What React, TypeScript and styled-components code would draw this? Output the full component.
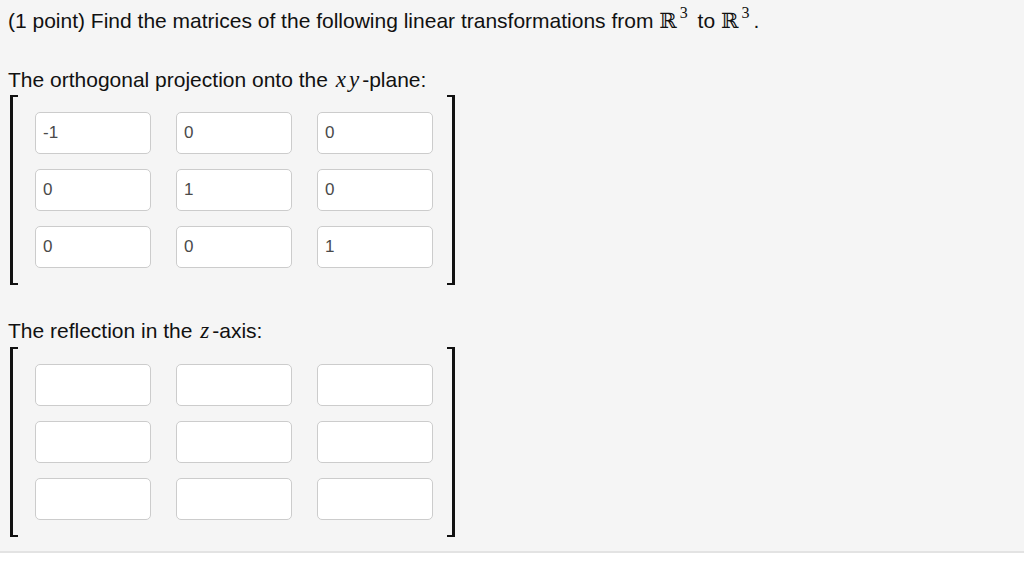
import React from "react";
import styled, { createGlobalStyle } from "styled-components";

const Global = createGlobalStyle`
  html, body { margin: 0; padding: 0; background: #ffffff; }
  body { font-family: "Liberation Sans", Arial, sans-serif; }
`;

const Page = styled.div`
  background: #f5f5f5;
  padding: 9px 0 0 8px;
  height: 553px;
  border-bottom: 2px solid #e3e3e3;
  box-sizing: border-box;
  width: 1024px;
`;

const Line = styled.div<{ $top?: number }>`
  font-size: 21px;
  line-height: 24px;
  color: #111;
  margin-top: ${(p) => p.$top ?? 0}px;
  white-space: nowrap;
`;

const MathVar = styled.span`
  font-family: "Liberation Serif", "Times New Roman", serif;
  font-style: italic;
  font-size: 23px;
  letter-spacing: 3px;
  margin-left: 2px;
`;

const Reals = styled.span`
  font-family: "DejaVu Serif", "DejaVu Sans", serif;
  font-size: 21px;
`;

const Sup = styled.sup`
  font-family: "Liberation Serif", "Times New Roman", serif;
  font-size: 16px;
  vertical-align: 10px;
  line-height: 0;
  margin: 0 4px 0 3px;
`;

const Matrix = styled.div<{ $top: number }>`
  display: flex;
  align-items: stretch;
  margin-top: ${(p) => p.$top}px;
  margin-left: 2px;
  height: 190px;
`;

const Bracket = styled.span<{ $side: "left" | "right" }>`
  width: 8px;
  border-top: 2px solid #111;
  border-bottom: 2px solid #111;
  ${(p) => (p.$side === "left" ? "border-left: 3px solid #111;" : "border-right: 3px solid #111;")}
  box-sizing: border-box;
`;

const Grid = styled.div`
  display: grid;
  grid-template-columns: repeat(3, 116px);
  grid-auto-rows: 42px;
  column-gap: 25px;
  row-gap: 15px;
  align-content: start;
  padding-top: 17px;
  margin: 0 14px 0 17px;
`;

const Cell = styled.input`
  box-sizing: border-box;
  width: 116px;
  height: 42px;
  margin: 0;
  background: #ffffff;
  border: 1px solid #cccccc;
  border-radius: 5px;
  padding: 0 7px;
  font-family: "Liberation Sans", Arial, sans-serif;
  font-size: 17px;
  color: #4a4a4a;
  outline: none;
`;

const projection = [
  ["-1", "0", "0"],
  ["0", "1", "0"],
  ["0", "0", "1"],
];
const empty = [
  ["", "", ""],
  ["", "", ""],
  ["", "", ""],
];

function MatrixInput({ values, top }: { values: string[][]; top: number }) {
  return (
    <Matrix $top={top}>
      <Bracket $side="left" />
      <Grid>
        {values.flat().map((v, i) => (
          <Cell key={i} readOnly value={v} />
        ))}
      </Grid>
      <Bracket $side="right" />
    </Matrix>
  );
}

export default function App() {
  return (
    <>
      <Global />
      <Page>
        <Line>
          (1 point) Find the matrices of the following linear transformations from <Reals>ℝ</Reals>
          <Sup>3</Sup> to <Reals>ℝ</Reals>
          <Sup>3</Sup>.
        </Line>
        <Line $top={35}>
          The orthogonal projection onto the <MathVar>xy</MathVar>-plane:
        </Line>
        <MatrixInput values={projection} top={3} />
        <Line $top={34}>
          The reflection in the <MathVar>z</MathVar>-axis:
        </Line>
        <MatrixInput values={empty} top={4} />
      </Page>
    </>
  );
}
